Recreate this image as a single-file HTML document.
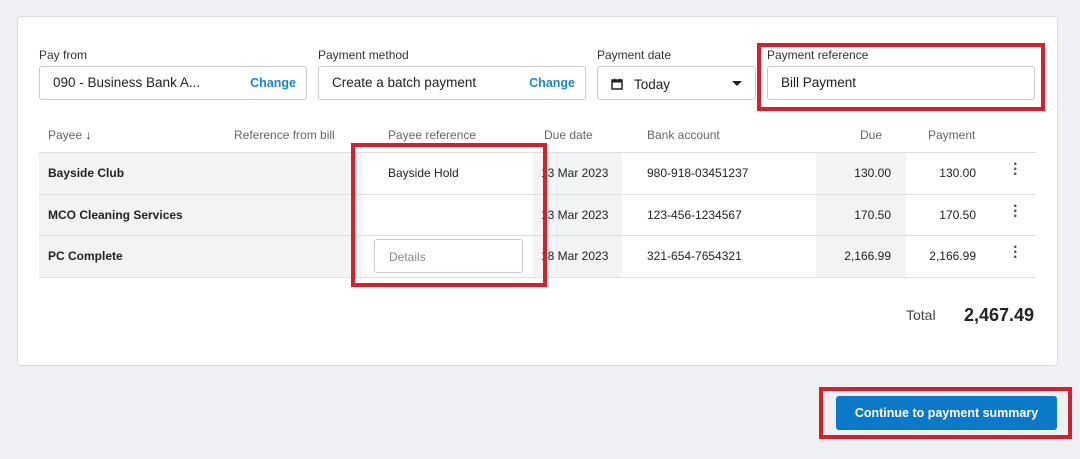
<!DOCTYPE html>
<html><head><meta charset="utf-8"><style>
*{margin:0;padding:0;box-sizing:border-box}
body{width:1080px;height:459px;background:#eff0f3;font-family:"Liberation Sans",Arial,sans-serif;position:relative;overflow:hidden;color:#222}
.a{position:absolute}
.card{left:17px;top:16px;width:1041px;height:350px;background:#fff;border:1px solid #d9dbe0;border-radius:4px}
.lbl{font-size:12px;color:#333;top:48px}
.inp{top:66px;height:34px;border:1px solid #c7cad0;border-radius:3px;background:#fff;font-size:13.5px;color:#222;line-height:32px;padding-left:13px}
.chg{position:absolute;right:10px;top:0;color:#1a8ac0;font-weight:bold;font-size:12.5px}
.th{top:128px;font-size:12px;color:#666}
.g{background:#f2f3f5}
.line{left:39px;width:997px;height:1px;background:#dcdee2}
.c{font-size:12px;color:#222}
.b{font-weight:bold}
.red{border:4px solid #d2202f}
.dots{font-size:16px;color:#555;font-weight:bold;width:4px}
</style></head><body>
<div class="a card"></div>
<div class="a lbl" style="left:39px">Pay from</div>
<div class="a lbl" style="left:318px">Payment method</div>
<div class="a lbl" style="left:597px">Payment date</div>
<div class="a lbl" style="left:767px">Payment reference</div>
<div class="a inp" style="left:39px;width:268px">090 - Business Bank A...<span class="chg">Change</span></div>
<div class="a inp" style="left:318px;width:268px">Create a batch payment<span class="chg">Change</span></div>
<div class="a inp" style="left:597px;width:159px;padding-left:36px;line-height:35px">Today
<svg class="a" style="left:13px;top:11px" width="12" height="12" viewBox="0 0 12 12"><rect x="1" y="2" width="10" height="9" fill="none" stroke="#222" stroke-width="1.5"/><rect x="1" y="2" width="10" height="2.5" fill="#222"/><rect x="3" y="0.5" width="1.2" height="2" fill="#222"/><rect x="8" y="0.5" width="1.2" height="2" fill="#222"/></svg>
<svg class="a" style="left:134px;top:14px" width="10" height="6"><path d="M0 0h10L5 5z" fill="#222"/></svg></div>
<div class="a inp" style="left:767px;width:268px">Bill Payment</div>

<div class="a g" style="left:39px;top:153px;width:323px;height:124px"></div>
<div class="a g" style="left:533px;top:153px;width:89px;height:124px"></div>
<div class="a g" style="left:816px;top:153px;width:90px;height:124px"></div>

<div class="a th" style="left:48px">Payee <b style="color:#222">&#8595;</b></div>
<div class="a th" style="left:234px">Reference from bill</div>
<div class="a th" style="left:388px">Payee reference</div>
<div class="a th" style="left:544px">Due date</div>
<div class="a th" style="left:647px">Bank account</div>
<div class="a th" style="left:860px">Due</div>
<div class="a th" style="left:928px">Payment</div>

<div class="a line" style="top:152px"></div>
<div class="a line" style="top:194px"></div>
<div class="a line" style="top:235px"></div>
<div class="a line" style="top:277px"></div>

<div class="a c b" style="left:48px;top:166px">Bayside Club</div>
<div class="a c b" style="left:48px;top:208px">MCO Cleaning Services</div>
<div class="a c b" style="left:48px;top:249px">PC Complete</div>
<div class="a c" style="left:388px;top:166px">Bayside Hold</div>
<div class="a" style="left:374px;top:239px;width:149px;height:34px;border:1px solid #c7cad0;border-radius:3px;background:#fff;font-size:12px;color:#888;padding:10px 14px">Details</div>
<div class="a c" style="left:541px;top:166px">13 Mar 2023</div>
<div class="a c" style="left:541px;top:208px">13 Mar 2023</div>
<div class="a c" style="left:541px;top:249px">18 Mar 2023</div>
<div class="a c" style="left:647px;top:166px">980-918-03451237</div>
<div class="a c" style="left:647px;top:208px">123-456-1234567</div>
<div class="a c" style="left:647px;top:249px">321-654-7654321</div>
<div class="a c" style="left:820px;width:71px;text-align:right;top:166px">130.00</div>
<div class="a c" style="left:820px;width:71px;text-align:right;top:208px">170.50</div>
<div class="a c" style="left:820px;width:71px;text-align:right;top:249px">2,166.99</div>
<div class="a c" style="left:900px;width:76px;text-align:right;top:166px">130.00</div>
<div class="a c" style="left:900px;width:76px;text-align:right;top:208px">170.50</div>
<div class="a c" style="left:900px;width:76px;text-align:right;top:249px">2,166.99</div>
<div class="a dots" style="left:1013px;top:162px;line-height:5px">·<br>·<br>·</div>
<div class="a dots" style="left:1013px;top:204px;line-height:5px">·<br>·<br>·</div>
<div class="a dots" style="left:1013px;top:245px;line-height:5px">·<br>·<br>·</div>

<div class="a" style="left:906px;top:307px;font-size:14px;color:#444">Total</div>
<div class="a" style="left:964px;top:305px;font-size:18px;font-weight:bold;color:#222">2,467.49</div>

<div class="a" style="left:836px;top:396px;width:221px;height:34px;background:#0b78c8;border-radius:3px;color:#fff;font-weight:bold;font-size:12.5px;text-align:center;line-height:34px">Continue to payment summary</div>

<div class="a red" style="left:757px;top:43px;width:288px;height:68px"></div>
<div class="a red" style="left:351px;top:143px;width:196px;height:144px"></div>
<div class="a red" style="left:819px;top:387px;width:253px;height:52px"></div>
</body></html>
